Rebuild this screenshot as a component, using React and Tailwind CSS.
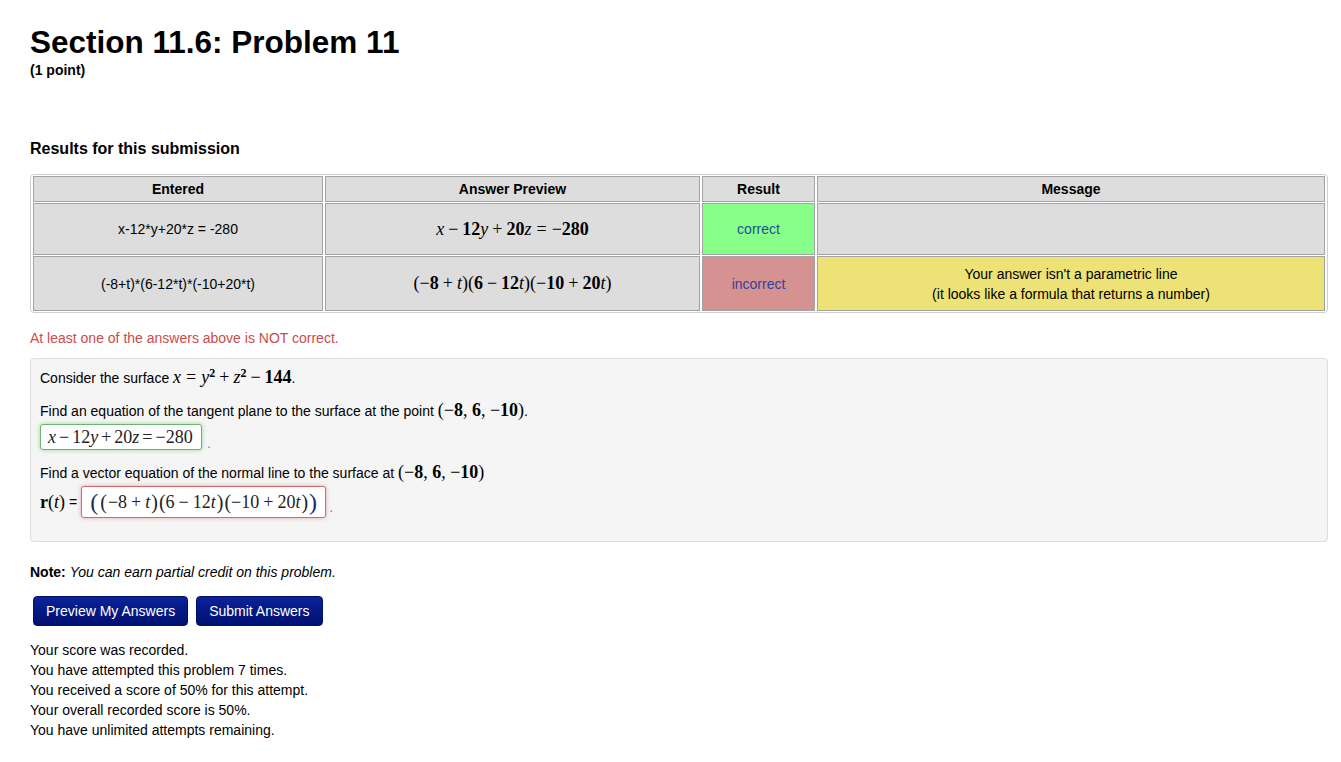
import React from "react";

const Bin = ({ c }) => <span className="mx-[4px]">{c}</span>;
const Rel = ({ c }) => <span className="mx-[5px]">{c}</span>;
const N = ({ c }) => <span className="font-bold">{c}</span>;
const V = ({ c }) => <span className="italic">{c}</span>;

const mathCls = "font-['Liberation_Serif',serif] text-[18px] leading-[20px] whitespace-nowrap";

function Header({ children }) {
  return (
    <th className="h-[26px] bg-[#dddddd] border border-[#a3a3a3] font-bold text-[14px] text-center align-middle p-0">
      {children}
    </th>
  );
}

export default function App() {
  return (
    <div className="min-h-screen bg-white text-black font-['Liberation_Sans',Arial,sans-serif] text-[14px] leading-[20px] pl-[30px] pr-[13px] pt-[24px]">
      <h1 className="text-[31.5px] leading-[36px] font-bold">Section 11.6: Problem 11</h1>
      <div className="font-bold text-[14px] leading-[20px]">(1 point)</div>

      <h2 className="mt-[59px] text-[16px] leading-[20px] font-bold">Results for this submission</h2>

      <table className="mt-[15px] w-full table-fixed border-separate border-spacing-x-[2px] border-spacing-y-[1px] border border-[#cfcfcf] rounded-[4px]">
        <colgroup>
          <col className="w-[290px]" />
          <col className="w-[375px]" />
          <col className="w-[113px]" />
          <col />
        </colgroup>
        <thead>
          <tr>
            <Header>Entered</Header>
            <Header>Answer Preview</Header>
            <Header>Result</Header>
            <Header>Message</Header>
          </tr>
        </thead>
        <tbody>
          <tr>
            <td className="h-[52px] bg-[#dddddd] border border-[#a3a3a3] text-center">x-12*y+20*z = -280</td>
            <td className="bg-[#dddddd] border border-[#a3a3a3] text-center">
              <span className={mathCls}>
                <V c="x" />
                <Bin c="−" />
                <N c="12" />
                <V c="y" />
                <Bin c="+" />
                <N c="20" />
                <V c="z" />
                <Rel c="=" />
                −<N c="280" />
              </span>
            </td>
            <td className="bg-[#88ff88] border border-[#a3a3a3] text-center text-[#1d4f9c]">correct</td>
            <td className="bg-[#dddddd] border border-[#a3a3a3]"></td>
          </tr>
          <tr>
            <td className="h-[55px] bg-[#dddddd] border border-[#a3a3a3] text-center">(-8+t)*(6-12*t)*(-10+20*t)</td>
            <td className="bg-[#dddddd] border border-[#a3a3a3] text-center">
              <span className={mathCls}>
                (−<N c="8" />
                <Bin c="+" />
                <V c="t" />)(<N c="6" />
                <Bin c="−" />
                <N c="12" />
                <V c="t" />)(−<N c="10" />
                <Bin c="+" />
                <N c="20" />
                <V c="t" />)
              </span>
            </td>
            <td className="bg-[#d69191] border border-[#a3a3a3] text-center text-[#34409a]">incorrect</td>
            <td className="bg-[#ede276] border border-[#a3a3a3] text-center leading-[20px]">
              Your answer isn't a parametric line
              <br />
              (it looks like a formula that returns a number)
            </td>
          </tr>
        </tbody>
      </table>

      <p className="mt-[15px] text-[#cc4b4b]">At least one of the answers above is NOT correct.</p>

      <div className="mt-[10px] border border-[#dddddd] rounded-[4px] bg-[#f5f5f5] px-[9px] pt-[8px] pb-[23px]">
        <p>
          Consider the surface{" "}
          <span className={mathCls}>
            <V c="x" />
            <Rel c="=" />
            <V c="y" />
            <sup className="text-[12px] font-bold">2</sup>
            <Bin c="+" />
            <V c="z" />
            <sup className="text-[12px] font-bold">2</sup>
            <Bin c="−" />
            <N c="144" />
          </span>
          .
        </p>

        <p className="mt-[12px]">
          Find an equation of the tangent plane to the surface at the point{" "}
          <span className={mathCls}>
            (−<N c="8" />, <N c="6" />, −<N c="10" />)
          </span>
          .
        </p>
        <div className="mt-[3px] flex items-end">
          <div className="h-[26px] w-[162px] flex items-center px-[7px] bg-white border border-[#6cb56c] rounded-[3px] shadow-[0_0_4px_rgba(60,160,60,0.45)] font-['Liberation_Serif',serif] text-[18px] text-[#222] whitespace-nowrap">
            <V c="x" />
            <span className="mx-[3px]">−</span>12
            <V c="y" />
            <span className="mx-[3px]">+</span>20
            <V c="z" />
            <span className="mx-[3px]">=</span>−280
          </div>
          <span className="ml-[5px] text-[#888] leading-[14px]">.</span>
        </div>

        <p className="mt-[12px]">
          Find a vector equation of the normal line to the surface at{" "}
          <span className={mathCls}>
            (−<N c="8" />, <N c="6" />, −<N c="10" />)
          </span>
        </p>
        <div className="mt-[3px] flex items-center">
          <span className="font-['Liberation_Serif',serif] text-[18px]">
            <span className="font-bold">r</span>(<V c="t" />)
          </span>
          <span className="ml-[4px]">=</span>
          <div className="ml-[4px] h-[32px] w-[245px] flex items-center px-[8px] bg-white border border-[#d06a6a] rounded-[3px] shadow-[0_0_4px_rgba(200,60,60,0.4)] font-['Liberation_Serif',serif] text-[18px] text-[#222] whitespace-nowrap">
            <span className="text-[24px] leading-[24px] text-[#1a2a6a] mr-[2px]">(</span>
            <span className="text-[20px] leading-[20px] mr-[1px]">(</span>−8<span className="mx-[4px]">+</span>
            <V c="t" />
            <span className="text-[20px] leading-[20px] mx-[1px]">)</span>
            <span className="text-[20px] leading-[20px]">(</span>6<span className="mx-[4px]">−</span>12
            <V c="t" />
            <span className="text-[20px] leading-[20px] mx-[1px]">)</span>
            <span className="text-[20px] leading-[20px]">(</span>−10<span className="mx-[4px]">+</span>20
            <V c="t" />
            <span className="text-[20px] leading-[20px] mx-[1px]">)</span>
            <span className="text-[24px] leading-[24px] text-[#1a2a6a]">)</span>
          </div>
          <span className="ml-[3px] self-end mb-[4px] text-[#888] leading-[14px]">.</span>
        </div>
      </div>

      <p className="mt-[20px]">
        <span className="font-bold">Note:</span> <span className="italic">You can earn partial credit on this problem.</span>
      </p>

      <div className="mt-[14px] flex gap-[8px] pl-[3px]">
        <button className="h-[30px] px-[12px] rounded-[4px] border border-[#00106a] bg-linear-to-b from-[#0c2299] to-[#001070] text-white text-[14px]">
          Preview My Answers
        </button>
        <button className="h-[30px] px-[12px] rounded-[4px] border border-[#00106a] bg-linear-to-b from-[#0c2299] to-[#001070] text-white text-[14px]">
          Submit Answers
        </button>
      </div>

      <div className="mt-[14px]">
        <div>Your score was recorded.</div>
        <div>You have attempted this problem 7 times.</div>
        <div>You received a score of 50% for this attempt.</div>
        <div>Your overall recorded score is 50%.</div>
        <div>You have unlimited attempts remaining.</div>
      </div>
    </div>
  );
}
